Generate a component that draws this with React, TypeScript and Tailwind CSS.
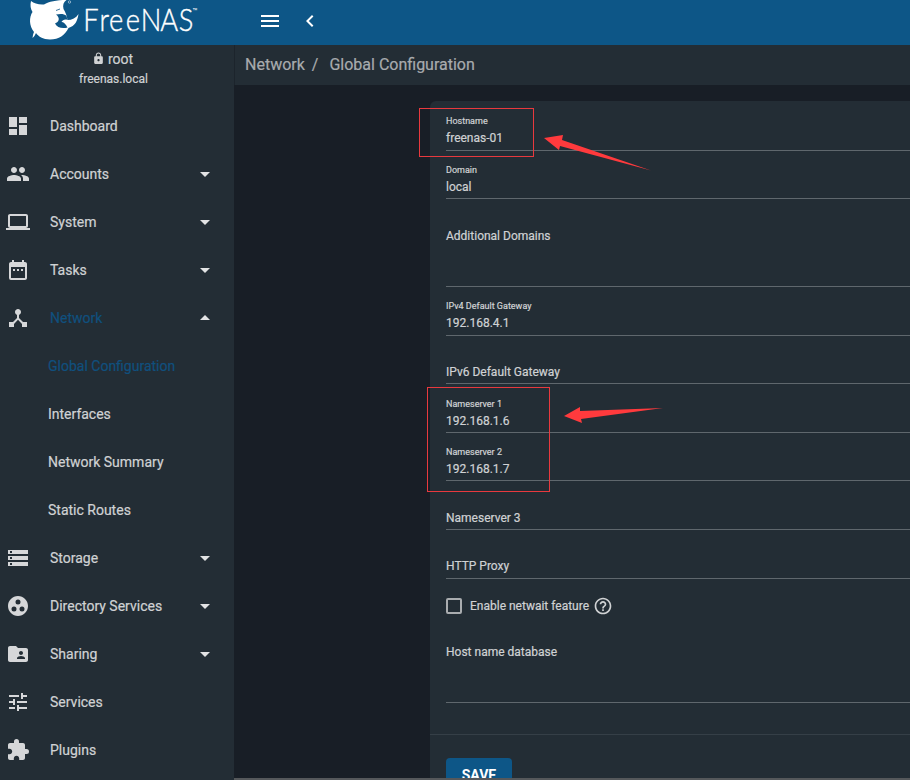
import type { IconType } from "react-icons";
import {
  MdDashboard,
  MdPeople,
  MdLaptop,
  MdDateRange,
  MdDeviceHub,
  MdStorage,
  MdGroupWork,
  MdFolderShared,
  MdTune,
  MdExtension,
  MdLock,
  MdMenu,
  MdChevronLeft,
  MdArrowDropDown,
  MdArrowDropUp,
  MdHelpOutline,
} from "react-icons/md";

type Item = {
  label: string;
  icon?: IconType;
  arrow?: "up" | "down";
  active?: boolean;
};

const items: Item[] = [
  { label: "Dashboard", icon: MdDashboard },
  { label: "Accounts", icon: MdPeople, arrow: "down" },
  { label: "System", icon: MdLaptop, arrow: "down" },
  { label: "Tasks", icon: MdDateRange, arrow: "down" },
  { label: "Network", icon: MdDeviceHub, arrow: "up", active: true },
  { label: "Global Configuration", active: true },
  { label: "Interfaces" },
  { label: "Network Summary" },
  { label: "Static Routes" },
  { label: "Storage", icon: MdStorage, arrow: "down" },
  { label: "Directory Services", icon: MdGroupWork, arrow: "down" },
  { label: "Sharing", icon: MdFolderShared, arrow: "down" },
  { label: "Services", icon: MdTune },
  { label: "Plugins", icon: MdExtension },
];

function Logo() {
  return (
    <svg width="234" height="45" viewBox="0 0 234 45" className="block">
      <path
        fill="#fff"
        d="M31 1 C34 3.500 39 5 44 4.500 C49 1.500 56 0 66.500 0 C63.500 2 62.500 5 63.500 9 C65.500 12 67 16 67.500 20 C72 20 76 18 78.500 14 C77.500 21 75 26 68.500 28 C65 35 59 39.500 50 39.500 C43 39.500 38 36 36 33 C35 35 34 37 32.500 38 C33 35.500 33 34 34 32 C29 26 29 17 32.500 12 C30.500 9 30 5 31 1 Z"
      />
      <path
        fill="#0d5687"
        d="M55 23.500 C59 22 60.500 18 56 14.500 C60 14 64 13.500 66.500 16 L67.500 20 C65 19 62.500 20 61.500 22 C63.500 22 66 24 67.500 27.500 C62 29 57 27.500 55 23.500 Z"
      />
      <path d="M56 10.500 L60 9" stroke="#0d5687" strokeWidth=".8" />
      <circle cx="69.500" cy="2" r="1.200" fill="none" stroke="#b9d0df" strokeWidth=".7" />
      <text
        transform="scale(.88 1)"
        x="94.500 113 124 143 160 182 203"
        y="31.500"
        fill="#fff"
        stroke="#fff"
        strokeWidth=".4"
        fontFamily="Lato, sans-serif"
        fontWeight="300"
        fontSize="31"
      >
        FreeNAS
      </text>
      <text x="192.500" y="14" fill="#fff" fontFamily="Roboto, sans-serif" fontSize="8">
        ™
      </text>
    </svg>
  );
}

function NavItem({ label, icon: Icon, arrow, active }: Item) {
  return (
    <li className="flex h-12 items-center pl-1.5 pr-[17px]">
      {Icon && <Icon className="size-6 text-[#d6d7d9]" />}
      <span
        className={`flex-1 whitespace-nowrap ${Icon ? "pl-5" : "pl-[42px]"} ${active ? "text-[#10507e]" : "text-[#d0d2d4]"}`}
      >
        {label}
      </span>
      {arrow === "down" && <MdArrowDropDown className="size-6 text-[#e2e3e4]" />}
      {arrow === "up" && <MdArrowDropUp className="size-6 text-[#e2e3e4]" />}
    </li>
  );
}

function Field({ label, value, className }: { label: string; value?: string; className: string }) {
  return (
    <div className={`flex shrink-0 flex-col border-b border-[#5f676d] ${className}`}>
      {value ? (
        <>
          <span className="text-[9px] leading-[12px]">{label}</span>
          <span className="mt-[3px] text-[12px] leading-4">{value}</span>
        </>
      ) : (
        <span className="text-[12px] leading-4">{label}</span>
      )}
    </div>
  );
}

export default function App() {
  return (
    <div className="relative flex h-[780px] w-[910px] overflow-hidden bg-[#181e26] font-['Roboto',sans-serif] text-[#d0d2d4] [-webkit-text-stroke:0.2px]">
      <aside className="flex w-[234px] shrink-0 flex-col bg-[#232d35]">
        <div className="h-[45px] bg-[#0d5687]">
          <Logo />
        </div>
        <div className="flex h-[57px] flex-col items-center pr-[7px] pt-1.5">
          <div className="mr-0.5 flex items-center gap-[3px] text-[14px] leading-4">
            <MdLock className="mb-0.5 size-[13px]" />
            <span>root</span>
          </div>
          <div className="mt-1 text-[12px] leading-4">freenas.local</div>
        </div>
        <ul className="flex flex-col text-[14px]">
          {items.map((item) => (
            <NavItem key={item.label} {...item} />
          ))}
        </ul>
      </aside>

      <main className="flex min-w-0 flex-1 flex-col">
        <header className="flex h-[45px] shrink-0 items-center gap-4 bg-[#0d5687] pb-[3px] pl-6 text-white">
          <MdMenu className="size-6" />
          <MdChevronLeft className="size-6" />
        </header>
        <nav className="flex h-10 shrink-0 items-center border-l border-[#1c242c] bg-[#232d35] pl-2.5 text-[16px] text-[#a8abae]">
          <span>Network</span>
          <span className="pl-[7px]">/</span>
          <span className="pl-[11px]">Global Configuration</span>
        </nav>
        <div className="flex min-h-0 flex-1 flex-col overflow-hidden pl-[196px] pt-4">
          <section className="flex flex-1 flex-col rounded-tl-md bg-[#232d35]">
            <div className="flex h-[633px] shrink-0 flex-col pl-4">
              <Field label="Hostname" value="freenas-01" className="h-[50px] pt-[14px]" />
              <Field label="Domain" value="local" className="h-12 pt-[13px]" />
              <Field label="Additional Domains" className="h-[88px] pt-[29px]" />
              <Field label="IPv4 Default Gateway" value="192.168.4.1" className="h-[49px] pt-[13px]" />
              <Field label="IPv6 Default Gateway" className="h-12 pt-7" />
              <Field label="Nameserver 1" value="192.168.1.6" className="h-[49px] pt-[14px]" />
              <Field label="Nameserver 2" value="192.168.1.7" className="h-12 pt-[13px]" />
              <Field label="Nameserver 3" className="h-[49px] pt-[29px]" />
              <Field label="HTTP Proxy" className="h-[49px] pt-7" />
              <div className="flex h-[55px] shrink-0 items-center pb-0.5">
                <span className="size-4 rounded-[2px] border-2 border-[#a9acaf]" />
                <span className="pl-2 text-[12px]">Enable netwait feature</span>
                <MdHelpOutline className="ml-1 size-5" />
              </div>
              <Field label="Host name database" className="h-[69px] pt-[10px]" />
            </div>
            <div className="flex-1 border-t border-[#353f47] pl-4 pt-[23px]">
              <button className="flex h-[34px] w-[66px] items-center justify-center rounded-sm bg-[#0d5687] text-[14px] font-bold text-white [-webkit-text-stroke:0]">
                SAVE
              </button>
            </div>
          </section>
        </div>
        <div className="h-0.5 shrink-0 bg-[#55585b]" />
      </main>

      <div className="pointer-events-none absolute left-[419px] top-[108px] h-[49px] w-[115px] border border-[#e8393e]" />
      <div className="pointer-events-none absolute left-[427px] top-[387px] h-[105px] w-[123px] border border-[#e8393e]" />
      <svg className="pointer-events-none absolute left-0 top-0" width="910" height="780">
        <path fill="#ff3a3d" d="M544 138 L563 135 L562 140 L651 170.500 L560 146 L559 150 Z" />
        <path fill="#ff3a3d" d="M564 416 L580 407 L580 411 L663 408 L581 419 L582 423 Z" />
      </svg>
    </div>
  );
}
